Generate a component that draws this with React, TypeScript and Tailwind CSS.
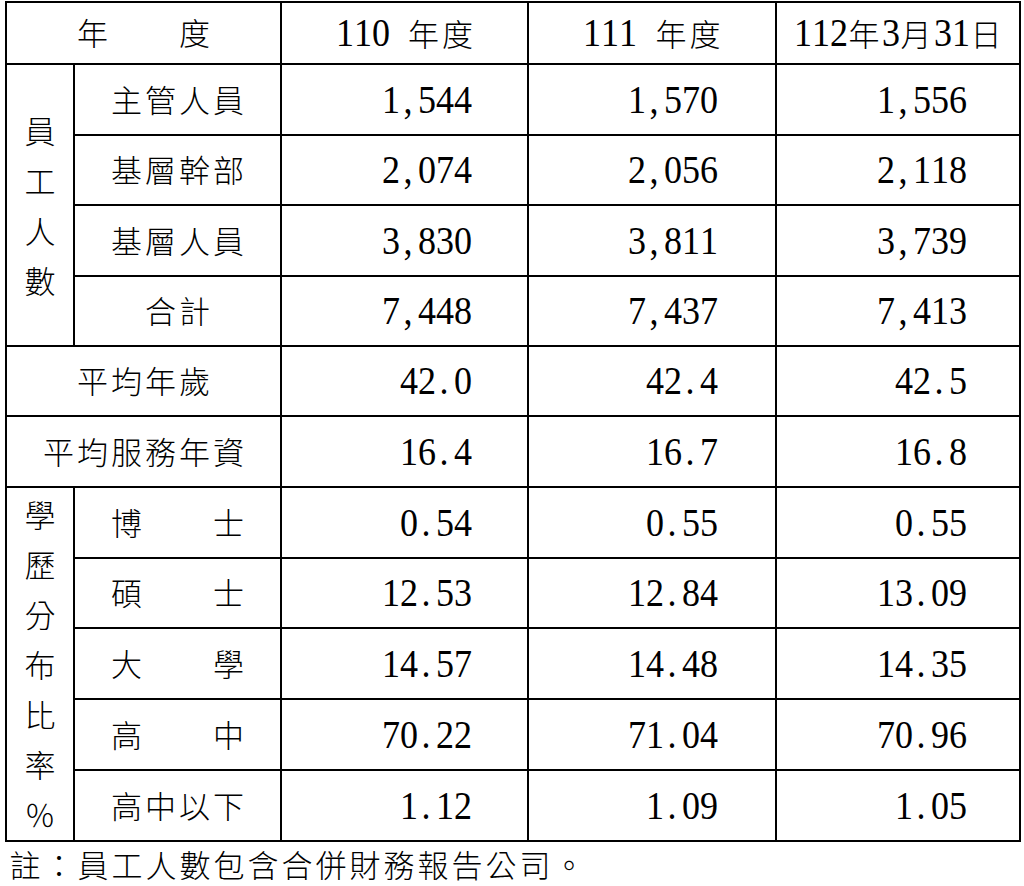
import React from "react";

// Each character sits in a fixed box, like the half/full width cells of a Ming font
const Txt = ({ text }: { text: string }) => (
  <>
    {text.split("").map((ch, i) =>
      ch.charCodeAt(0) < 128 ? (
        <span
          key={i}
          className="inline-block w-[18px] text-center [font-family:'Liberation_Serif',serif] text-[40px] leading-none"
        >
          <span className="inline-block scale-x-90">{ch === " " ? "\u00a0" : ch}</span>
        </span>
      ) : (
        <span key={i} className="inline-block w-[34px] text-center text-[31px] leading-none font-light">
          {ch === "\u3000" ? "\u00a0" : ch}
        </span>
      )
    )}
  </>
);

const Vertical = ({ text }: { text: string }) => (
  <div className="flex flex-col items-center">
    {text.split("").map((ch, i) => (
      <span key={i} className="h-[50px] leading-[50px] text-[31px] font-light">
        {ch}
      </span>
    ))}
  </div>
);

type Row = { label: string; values: string[] };

const staff: Row[] = [
  { label: "主管人員", values: ["1,544", "1,570", "1,556"] },
  { label: "基層幹部", values: ["2,074", "2,056", "2,118"] },
  { label: "基層人員", values: ["3,830", "3,811", "3,739"] },
  { label: "合計", values: ["7,448", "7,437", "7,413"] },
];

const edu: Row[] = [
  { label: "博\u3000\u3000士", values: ["0.54", "0.55", "0.55"] },
  { label: "碩\u3000\u3000士", values: ["12.53", "12.84", "13.09"] },
  { label: "大\u3000\u3000學", values: ["14.57", "14.48", "14.35"] },
  { label: "高\u3000\u3000中", values: ["70.22", "71.04", "70.96"] },
  { label: "高中以下", values: ["1.12", "1.09", "1.05"] },
];

const cell = "border-2 border-black p-0";
const pads = ["pr-[56px]", "pr-[58px]", "pr-[53px]"];

const Nums = ({ values }: { values: string[] }) => (
  <>
    {values.map((v, i) => (
      <td key={i} className={`${cell} ${pads[i]} text-right whitespace-nowrap`}>
        <Txt text={v} />
      </td>
    ))}
  </>
);

export default function App() {
  return (
    <div className="w-[1024px] h-[886px] bg-white text-black pt-px pl-[5px] font-['Noto_Sans_CJK_TC','Noto_Sans_CJK_SC',sans-serif]">
      <table className="border-collapse table-fixed w-[1014px]">
        <colgroup>
          <col className="w-[68px]" />
          <col className="w-[207px]" />
          <col className="w-[247px]" />
          <col className="w-[248px]" />
          <col className="w-[244px]" />
        </colgroup>
        <tbody>
          <tr className="h-[62px]">
            <td colSpan={2} className={`${cell} text-center`}>
              <Txt text={"年\u3000\u3000度"} />
            </td>
            <td className={`${cell} text-center`}>
              <Txt text="110 年度" />
            </td>
            <td className={`${cell} text-center`}>
              <Txt text="111 年度" />
            </td>
            <td className={`${cell} text-center`}>
              <Txt text="112年3月31日" />
            </td>
          </tr>
          {staff.map((r, i) => (
            <tr key={r.label} className={i % 2 === 0 ? "h-[71px]" : "h-[70px]"}>
              {i === 0 && (
                <td rowSpan={4} className={`${cell} align-middle`}>
                  <Vertical text="員工人數" />
                </td>
              )}
              <td className={`${cell} text-center`}>
                <Txt text={r.label} />
              </td>
              <Nums values={r.values} />
            </tr>
          ))}
          <tr className="h-[70px]">
            <td colSpan={2} className={`${cell} text-center`}>
              <Txt text="平均年歲" />
            </td>
            <Nums values={["42.0", "42.4", "42.5"]} />
          </tr>
          <tr className="h-[71px]">
            <td colSpan={2} className={`${cell} text-center`}>
              <Txt text="平均服務年資" />
            </td>
            <Nums values={["16.4", "16.7", "16.8"]} />
          </tr>
          {edu.map((r, i) => (
            <tr key={r.label} className={i === 1 ? "h-[70px]" : "h-[71px]"}>
              {i === 0 && (
                <td rowSpan={5} className={`${cell} align-middle`}>
                  <Vertical text="學歷分布比率％" />
                </td>
              )}
              <td className={`${cell} text-center`}>
                <Txt text={r.label} />
              </td>
              <Nums values={r.values} />
            </tr>
          ))}
        </tbody>
      </table>
      <div className="mt-[6px] pl-[3px]">
        <Txt text="註：員工人數包含合併財務報告公司。" />
      </div>
    </div>
  );
}
